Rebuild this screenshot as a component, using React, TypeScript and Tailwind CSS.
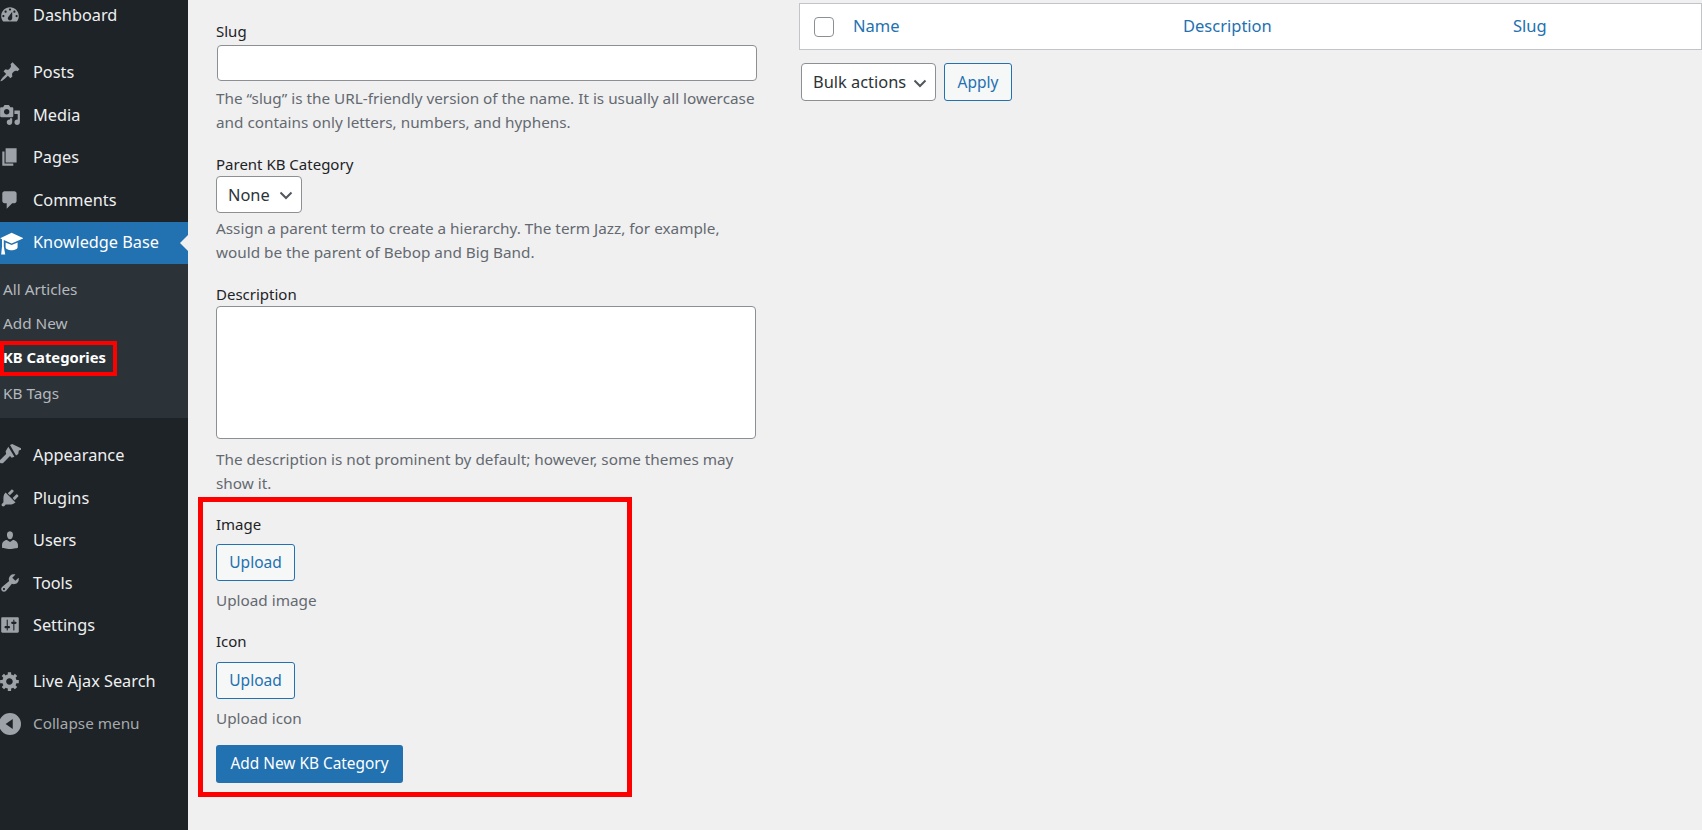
import React from "react";

const Icon = ({ d, size = 22 }: { d: string; size?: number }) => (
  <svg viewBox="0 0 20 20" width={size} height={size} fill="currentColor" className="-ml-[1px]">
    <path fillRule="evenodd" d={d} />
  </svg>
);

const paths = {
  dashboard: "M3.760 16h12.480c1.100-1.370 1.760-3.110 1.760-5 0-4.420-3.580-8-8-8s-8 3.580-8 8c0 1.890.66 3.630 1.760 5zM10 4c.55 0 1 .45 1 1s-.45 1-1 1-1-.45-1-1 .45-1 1-1zM6 6c.55 0 1 .45 1 1s-.45 1-1 1-1-.45-1-1 .45-1 1-1zm8 0c.55 0 1 .45 1 1s-.45 1-1 1-1-.45-1-1 .45-1 1-1zm-5.370 5.550L12 7v6c0 1.100-.9 2-2 2s-2-.9-2-2c0-.57.24-1.080.63-1.450zM4 10c.55 0 1 .45 1 1s-.45 1-1 1-1-.45-1-1 .45-1 1-1zm12 0c.55 0 1 .45 1 1s-.45 1-1 1-1-.45-1-1 .45-1 1-1z",
  pin: "M10.440 3.020l1.820-1.820 6.360 6.350-1.830 1.820c-1.050-.68-2.480-.57-3.410.36l-.75.75c-.92.93-1.040 2.350-.35 3.410l-1.830 1.820-2.410-2.410-2.800 2.790c-.42.420-3.380 2.710-3.800 2.290s1.860-3.390 2.280-3.810l2.790-2.790L4.100 9.360l1.830-1.820c1.050.69 2.480.57 3.400-.36l.75-.75c.93-.92 1.050-2.350.36-3.410z",
  media: "M13 11V4c0-.55-.45-1-1-1h-1.670L9 1H5L3.670 3H2c-.55 0-1 .45-1 1v7c0 .55.45 1 1 1h10c.55 0 1-.45 1-1zM7 4.500c1.380 0 2.500 1.120 2.500 2.500S8.380 9.500 7 9.500 4.500 8.380 4.500 7 5.620 4.500 7 4.500zM14 6h5v10.500c0 1.380-1.120 2.500-2.500 2.500S14 17.880 14 16.500s1.120-2.500 2.500-2.500c.17 0 .34.020.5.050V9h-3V6zm-4 8.050V13h2v3.500c0 1.380-1.120 2.500-2.500 2.500S7 17.880 7 16.500 8.120 14 9.500 14c.17 0 .34.020.5.050z",
  pages: "M6 15V2h10v13H6zm-1 1h8v2H3V5h2v11z",
  comment: "M5 2h9c1.100 0 2 .9 2 2v7c0 1.100-.9 2-2 2h-2l-5 5v-5H5c-1.100 0-2-.9-2-2V4c0-1.100.9-2 2-2z",
  learn: "M10.500 1.500L20.500 6l-10 4.500L4 7.600V13l1.200 6.500H1.800L2.500 13V6.800L1 6zM5.500 9.500l5 2.200 5-2.200v4c0 1.300-2.200 2.500-5 2.500s-5-1.200-5-2.500z",
  appearance: "M10 1l2-1 9.500 4.500L18 6l-.5 3-2 1.500zM8.500 2.500l5.500 9-2.500 1-1.500-1.500-6 6c-1 .8-3 .6-3.500-.5-.4-.9 0-1.500.5-2l5.500-5.500-.5-2.500z",
  plugin: "M13.110 4.360L9.870 7.600 8 5.730l3.240-3.240c.35-.34 1.050-.2 1.560.32.520.51.660 1.210.31 1.550zm-8 1.770l.91-1.120 9.010 9.010-1.190.84c-.71.710-2.630 1.160-3.820 1.160H6.140L4.900 17.260c-.59.590-1.540.59-2.120 0-.59-.58-.59-1.530 0-2.120l1.240-1.240v-3.880c0-1.130.4-3.190 1.090-3.890zm7.260 3.970l3.240-3.240c.34-.35 1.040-.21 1.550.31.520.51.660 1.210.31 1.550l-3.240 3.250z",
  users: "M10 9.250c-2.270 0-2.730-3.440-2.730-3.440C7 4.020 7.820 2 9.970 2c2.160 0 2.980 2.020 2.710 3.810 0 0-.41 3.440-2.680 3.440zm0 2.570L12.720 10c2.390 0 4.520 2.330 4.520 4.530v2.490s-3.650 1.130-7.240 1.130c-3.650 0-7.240-1.130-7.240-1.130v-2.490c0-2.250 1.940-4.480 4.470-4.480z",
  tools: "M16.680 9.770c-1.340 1.340-3.300 1.670-4.950.99l-5.410 6.520c-.99.990-2.590.990-3.580 0s-.99-2.590 0-3.570l6.520-5.420c-.68-1.650-.35-3.610.99-4.950 1.280-1.280 3.120-1.620 4.720-1.060l-2.890 2.890 2.820 2.820 2.860-2.860c.53 1.580.18 3.390-1.080 4.640zM3.810 16.210c.4.390 1.040.39 1.430 0 .4-.4.400-1.040 0-1.430-.39-.4-1.030-.4-1.430 0-.39.390-.39 1.030 0 1.430z",
  settings: "M18 16V4c0-.55-.45-1-1-1H3c-.55 0-1 .45-1 1v12c0 .55.45 1 1 1h14c.55 0 1-.45 1-1zM8 11h1c.55 0 1 .45 1 1s-.45 1-1 1H8v1.500c0 .28-.22.5-.5.5s-.5-.22-.5-.5V13H6c-.55 0-1-.45-1-1s.45-1 1-1h1V5.500c0-.28.22-.5.5-.5s.5.22.5.5V11zm5-2h-1c-.55 0-1-.45-1-1s.45-1 1-1h1V5.500c0-.28.22-.5.5-.5s.5.22.5.5V7h1c.55 0 1 .45 1 1s-.45 1-1 1h-1v5.500c0 .28-.22.5-.5.5s-.5-.22-.5-.5V9z",
  gear: "M18 12h-2.180c-.17.7-.44 1.350-.81 1.930l1.540 1.540-2.100 2.100-1.540-1.540c-.58.36-1.230.63-1.910.79V19H8v-2.180c-.68-.16-1.330-.43-1.910-.79l-1.540 1.540-2.120-2.120 1.540-1.540c-.36-.58-.63-1.230-.79-1.910H1V9.030h2.170c.16-.7.440-1.350.8-1.940L2.430 5.550l2.100-2.100 1.540 1.540c.58-.37 1.240-.64 1.930-.81V2h3v2.180c.68.16 1.330.43 1.910.79l1.540-1.540 2.120 2.120-1.540 1.540c.36.59.64 1.240.8 1.940H18V12zm-8.500 1.500c1.660 0 3-1.340 3-3s-1.340-3-3-3-3 1.340-3 3 1.340 3 3 3z",
  collapse: "M10 20a10 10 0 1 1 0-20 10 10 0 1 1 0 20zm2.500-14.500L6 10l6.500 4.500z",
};

const items1: [string, string, string][] = [
  ["Dashboard", paths.dashboard, "mb-[14.500px]"],
  ["Posts", paths.pin, ""],
  ["Media", paths.media, ""],
  ["Pages", paths.pages, ""],
  ["Comments", paths.comment, "mb-[0.500px]"],
];
const items2: [string, string][] = [
  ["Appearance", paths.appearance],
  ["Plugins", paths.plugin],
  ["Users", paths.users],
  ["Tools", paths.tools],
  ["Settings", paths.settings],
];

const Row = ({ label, d, className = "" }: { label: string; d: string; className?: string }) => (
  <div className={`flex h-[42.500px] items-center text-[16.300px] text-[#f0f0f1] ${className}`}>
    <span className="flex w-[33px] shrink-0 items-center text-[#9ca2a7]"><Icon d={d} /></span>
    <span>{label}</span>
  </div>
);

const Help = ({ children, className = "" }: { children: React.ReactNode; className?: string }) => (
  <p className={`text-[15.300px] leading-[23.500px] text-[#646970] ${className}`}>{children}</p>
);
const Label = ({ children, className = "" }: { children: React.ReactNode; className?: string }) => (
  <div className={`h-[20px] text-[15px] leading-[20px] text-[#1d2327] ${className}`}>{children}</div>
);
const Chevron = () => (
  <svg width="16" height="16" viewBox="0 0 16 16" fill="none" stroke="#50575e" strokeWidth="2">
    <path d="M2.500 5.500L8 11l5.500-5.500" />
  </svg>
);
const Select = ({ label, className = "" }: { label: string; className?: string }) => (
  <div className={`flex items-center justify-between rounded-[4px] border border-[#8c8f94] bg-white pl-[11px] pr-[7px] pt-[1px] text-[16.400px] text-[#2c3338] ${className}`}>
    <span>{label}</span>
    <Chevron />
  </div>
);
const Outline = ({ label, className = "" }: { label: string; className?: string }) => (
  <button className={`rounded-[3px] border border-[#2271b1] bg-[#f6f7f7] pt-[1px] text-[15.500px] text-[#2271b1] ${className}`}>{label}</button>
);

export default function App() {
  return (
    <div className="relative flex h-[830px] overflow-hidden bg-[#f0f0f0] font-['Noto_Sans','Open_Sans',sans-serif]">
      <aside className="w-[188px] shrink-0 bg-[#1d2327]">
        <div className="-mt-[6px]">
          {items1.map(([l, d, c]) => <Row key={l} label={l} d={d} className={c} />)}
        </div>
        <div className="relative flex h-[42px] items-center bg-[#2271b1] text-[16.300px] text-white">
          <span className="flex w-[33px] shrink-0 items-center"><Icon d={paths.learn} size={24} /></span>
          <span>Knowledge Base</span>
          <span className="absolute right-0 top-[13px] h-0 w-0 border-y-[8px] border-r-[8px] border-y-transparent border-r-[#f0f0f0]" />
        </div>
        <div className="bg-[#2c3338] pb-[6px] pl-[3px] pt-[8px] text-[15.300px] text-[#b4b9be]">
          <div className="flex h-[35px] items-center">All Articles</div>
          <div className="flex h-[34px] items-center">Add New</div>
          <div className="flex h-[34px] items-center text-[14.800px] font-bold text-white">KB Categories</div>
          <div className="flex h-[37px] items-center">KB Tags</div>
        </div>
        <div className="mt-[16.500px]">
          {items2.map(([l, d]) => <Row key={l} label={l} d={d} />)}
        </div>
        <Row label="Live Ajax Search" d={paths.gear} className="mt-[13px]" />
        <div className="flex h-[43px] items-center text-[15.300px] text-[#a7aaad]">
          <span className="flex w-[33px] shrink-0 items-center text-[#9ca2a7]"><Icon d={paths.collapse} /></span>
          <span>Collapse menu</span>
        </div>
      </aside>

      <section className="w-[611px] shrink-0 pl-[28px] pr-[42px] pt-[21px]">
        <Label>Slug</Label>
        <div className="ml-[1px] mt-[4px] h-[36px] w-[540px] rounded-[4px] border border-[#8c8f94] bg-white" />
        <Help className="mt-[6px]">The “slug” is the URL-friendly version of the name. It is usually all lowercase and contains only letters, numbers, and hyphens.</Help>
        <Label className="mt-[20px]">Parent KB Category</Label>
        <Select label="None" className="mt-[2px] h-[37px] w-[86px]" />
        <Help className="mt-[4px]">Assign a parent term to create a hierarchy. The term Jazz, for example, would be the parent of Bebop and Big Band.</Help>
        <Label className="mt-[20px]">Description</Label>
        <div className="mt-[2px] h-[133px] w-[540px] rounded-[4px] border border-[#8c8f94] bg-white" />
        <Help className="mt-[9px]">The description is not prominent by default; however, some themes may show it.</Help>
        <Label className="mt-[19px]">Image</Label>
        <Outline label="Upload" className="mt-[10px] block h-[37px] w-[79px]" />
        <Help className="mt-[8px]">Upload image</Help>
        <Label className="mt-[18px]">Icon</Label>
        <Outline label="Upload" className="mt-[11px] block h-[37px] w-[79px]" />
        <Help className="mt-[8px]">Upload icon</Help>
        <button className="mt-[15px] block h-[38px] w-[187px] rounded-[3px] bg-[#2271b1] text-[15.400px] text-white">Add New KB Category</button>
      </section>

      <section className="flex-1 pt-[3px]">
        <div className="flex h-[47px] items-center border border-[#c3c4c7] bg-white text-[16.500px] text-[#2271b1]">
          <span className="ml-[14px] h-[20px] w-[20px] rounded-[4px] border border-[#8c8f94] bg-white" />
          <span className="ml-[19px] w-[330px]">Name</span>
          <span className="w-[330px]">Description</span>
          <span>Slug</span>
        </div>
        <div className="ml-[2px] mt-[13px] flex gap-[8px]">
          <Select label="Bulk actions" className="h-[38px] w-[135px]" />
          <Outline label="Apply" className="h-[38px] w-[68px]" />
        </div>
      </section>

      <div className="pointer-events-none absolute left-[198px] top-[497px] h-[300px] w-[434px] border-[5px] border-[#ff0000]" />
      <div className="pointer-events-none absolute left-0 top-[341px] h-[35px] w-[117px] border-[4px] border-[#ff0000]" />
    </div>
  );
}
